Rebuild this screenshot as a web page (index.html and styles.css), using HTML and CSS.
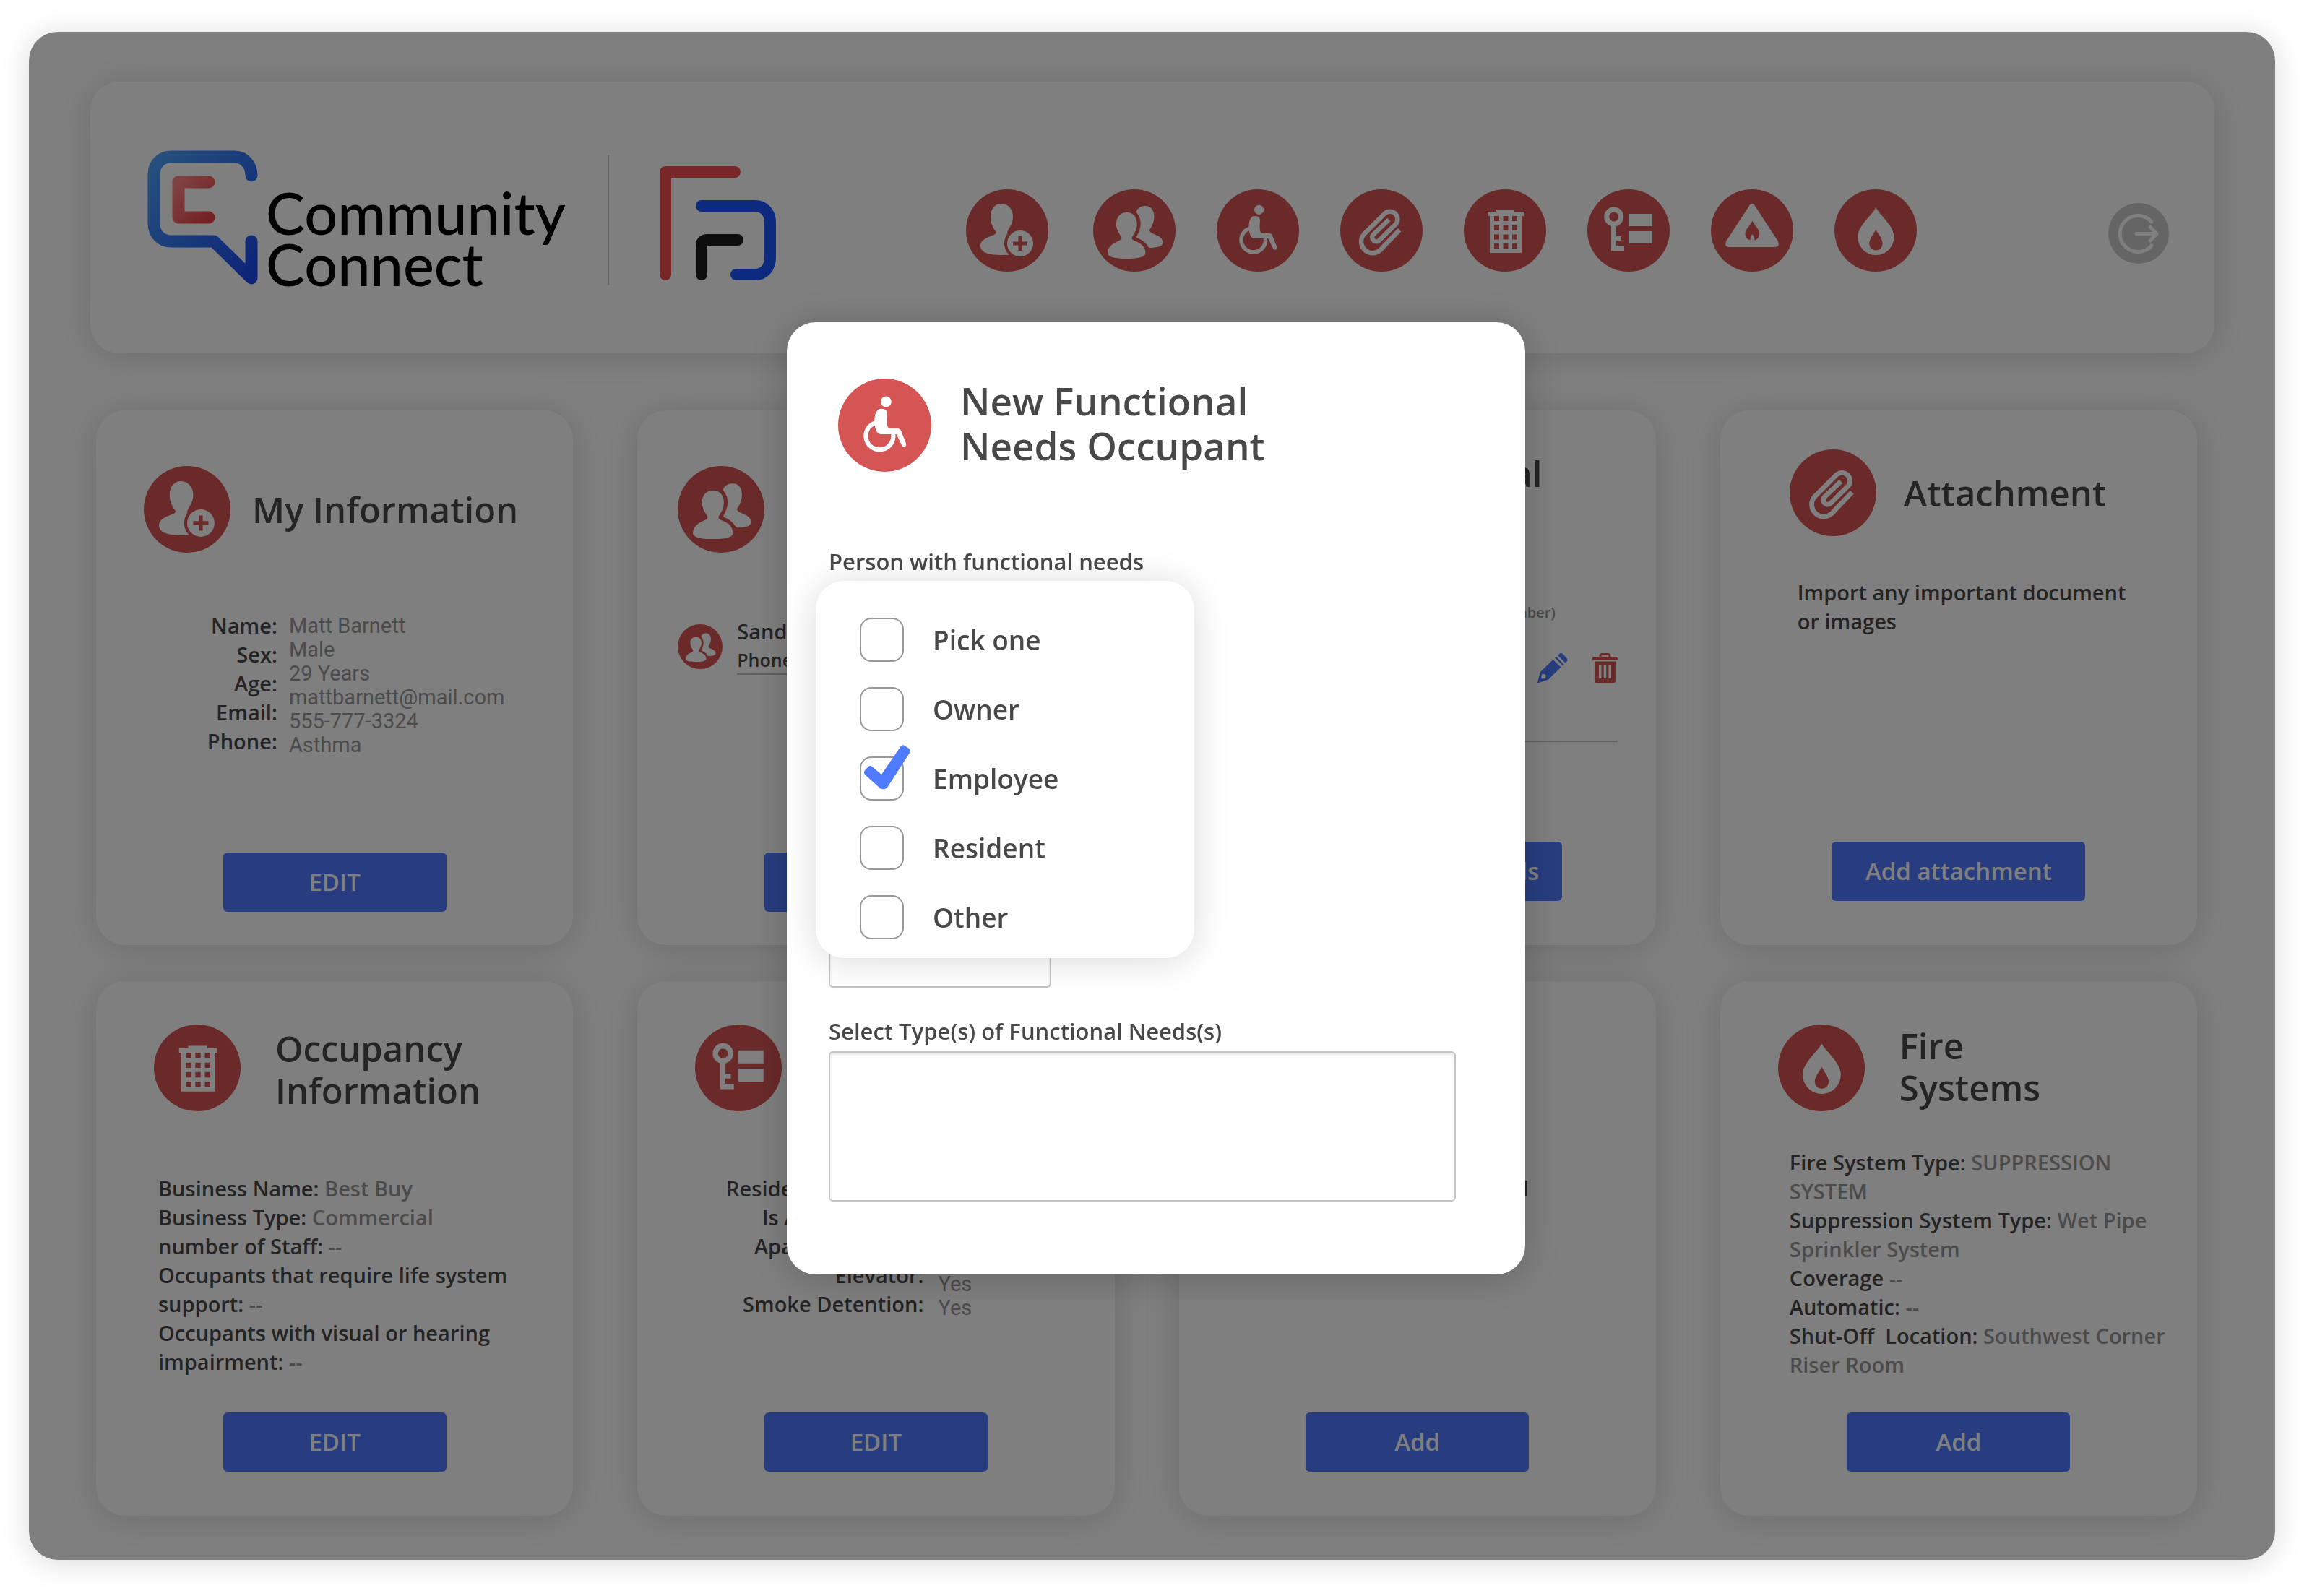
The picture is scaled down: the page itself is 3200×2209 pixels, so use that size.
FILE: index.html
```
<!DOCTYPE html>
<html lang="en">
<head>
  <meta charset="UTF-8">
  <meta name="viewport" content="width=device-width, initial-scale=1.0">
  <title>Community Connect</title>
  <link rel="stylesheet" href="styles.css">
</head>
<body>
  <!-- shared icons -->
  <svg class="sprite" width="0" height="0" aria-hidden="true">
    <symbol id="user-plus" viewBox="0 0 114 114">
      <circle cx="57" cy="57" r="57" fill="#d55454"/>
      <path fill="#fff" d="M49 20C58 20 65 27 65 38C65 47 60 53 57.500 58C56.500 62 58 63 62 65C71 68 78 71 78 80C78 88 66 91 49 91C32 91 20 88 20 78C20 70 29 67 36 64C42 62 42.500 60 41 58C37 53 34 46 34 38C34 27 40 20 49 20Z"/>
      <circle cx="75" cy="75" r="22" fill="#d55454"/>
      <circle cx="75" cy="75" r="18" fill="#fff"/>
      <path d="M75 65V85M65 75H85" stroke="#d55454" stroke-width="5"/>
    </symbol>
    <symbol id="users" viewBox="0 0 114 114">
      <circle cx="57" cy="57" r="57" fill="#d55454"/>
      <path fill="#fff" d="M72 23C80 23 84.400 29 84.400 38C84.400 46 81 52 78 56C78 59 80 60 84 62C92 65 96.500 68 96.500 74C96.500 79 88 81 78 81L60 68V30C62 26 66 23 72 23Z"/>
      <path fill="#fff" stroke="#d55454" stroke-width="10" paint-order="stroke" d="M46.500 32C55 32 60.700 38 60.700 48C60.700 56 57 61 54 66C53 69 54.500 70 59 72C67 75 72.500 80 72.500 88C72.500 94 62 96 46.500 96C31 96 20 94 20 88C20 80 27 75 34 72C38.500 70 40 69 39 66C36 61 32 56 32 48C32 38 38 32 46.500 32Z"/>
    </symbol>
    <symbol id="wheelchair" viewBox="0 0 114 114">
      <circle cx="57" cy="57" r="57" fill="#d55454"/>
      <circle cx="58.600" cy="28.300" r="6.600" fill="#fff"/>
      <path fill="#fff" d="M53 37C58 37 60.500 40 60 44.500C59 52 59.500 60.700 63 60.700H72Q75.500 60.700 77 64L83 79Q84 83 81 83.700Q79 84 78 82L71.300 68H52C47 68 44 60 44.500 50C45 43 47 37 53 37Z"/>
      <path fill="none" stroke="#fff" stroke-width="5.400" d="M46 54A16.800 16.800 0 1 0 67.400 68"/>
    </symbol>
    <symbol id="clip" viewBox="0 0 114 114">
      <circle cx="57" cy="57" r="57" fill="#d55454"/>
      <path fill="none" stroke="#fff" stroke-width="6.400" d="M82 56.300L55.300 84.300A15.800 15.800 0 0 1 33 62L61.400 33.700A10.600 10.600 0 0 1 77 48L53.400 71.300A5.800 5.800 0 0 1 45.500 63L67.400 42"/>
    </symbol>
    <symbol id="building" viewBox="0 0 114 114">
      <circle cx="57" cy="57" r="57" fill="#d55454"/>
      <path fill="#fff" d="M45 28H70V31H83V37H80V88H36V37H33V31H45Z"/>
      <path fill="none" stroke="#d55454" stroke-width="7" stroke-dasharray="7 5.500" d="M42 40.500H74M42 53.500H74M42 66H74M42 78.500H74"/>
    </symbol>
    <symbol id="key" viewBox="0 0 114 114">
      <circle cx="57" cy="57" r="57" fill="#d55454"/>
      <circle cx="36.700" cy="38" r="10" fill="none" stroke="#fff" stroke-width="7"/>
      <path fill="#fff" d="M33 50H40V65H47V71H40V78H51V85H33ZM57 34H90V51H57ZM57 58H90V75H57Z"/>
    </symbol>
    <symbol id="hazard" viewBox="0 0 114 114">
      <circle cx="57" cy="57" r="57" fill="#d55454"/>
      <path fill="#fff" d="M57 20Q59.500 20 61 23L93 72Q96 80 88 80H26Q18 80 21 72L53 23Q54.500 20 57 20Z"/>
      <path fill="#d55454" d="M57.400 43.700C60 50 67.400 55 67.400 61.500C67.400 66 64.500 69 60.500 70.600C60.800 67 59 64.500 57.400 62C56 64.500 54.300 67 54.600 70.600C50 69 47.500 66 47.500 61.500C47.500 55 55 50 57.400 43.700Z"/>
    </symbol>
    <symbol id="flame" viewBox="0 0 114 114">
      <circle cx="57" cy="57" r="57" fill="#d55454"/>
      <path fill="#fff" d="M57.400 25C62 35 82.500 50 82.500 66A25 25 0 0 1 32.300 66C32.300 50 53 35 57.400 25Z"/>
      <path fill="#d55454" d="M57.400 56C60 61 66.600 68 66.600 75.400A9.200 9.200 0 0 1 48.200 75.400C48.200 68 55 61 57.400 56Z"/>
    </symbol>
  </svg>

  <div class="stage">
    <header class="topbar">
      <a class="brand" href="#">
        <svg class="brand-mark" viewBox="0 0 153 186" aria-hidden="true">
          <defs>
            <linearGradient id="bubble" x1="0" y1="0" x2="1" y2="1">
              <stop offset="0" stop-color="#4ca0f8"/>
              <stop offset="1" stop-color="#1a48f0"/>
            </linearGradient>
            <linearGradient id="letter" x1="0" y1="0" x2="1" y2="1">
              <stop offset="0" stop-color="#ff8484"/>
              <stop offset="1" stop-color="#e8444a"/>
            </linearGradient>
          </defs>
          <path fill="none" stroke="url(#bubble)" stroke-width="17" stroke-linecap="round" stroke-linejoin="round" d="M144 35C144 20 134 9 121 9H33C18 9 9 20 9 33V101C9 115 18 126 33 126H92L144 177V126"/>
          <path fill="none" stroke="url(#letter)" stroke-width="17" stroke-linecap="round" stroke-linejoin="round" d="M85 44H43V93H85"/>
        </svg>
        <span class="brand-name">Community<br>Connect</span>
      </a>
      <span class="divider"></span>
      <svg class="fp-mark" viewBox="0 0 162 158" aria-hidden="true">
        <g fill="none" stroke-width="16" stroke-linecap="round" stroke-linejoin="round">
          <path stroke="#f24d53" d="M104 8H8V150"/>
          <path stroke="#1a54ff" d="M58 55H132C145 55 153 65 153 78V126C153 140 145 150 132 150H106"/>
          <path stroke="#1c1c1c" d="M108 102H66Q58 102 58 110V150"/>
        </g>
      </svg>
      <nav class="sections">
        <a href="#me" aria-label="My information"><svg class="nav-icon"><use href="#user-plus"/></svg></a>
        <a href="#contacts" aria-label="Contacts"><svg class="nav-icon"><use href="#users"/></svg></a>
        <a href="#needs" aria-label="Functional needs"><svg class="nav-icon"><use href="#wheelchair"/></svg></a>
        <a href="#attachment" aria-label="Attachment"><svg class="nav-icon"><use href="#clip"/></svg></a>
        <a href="#occupancy" aria-label="Occupancy information"><svg class="nav-icon"><use href="#building"/></svg></a>
        <a href="#property" aria-label="Property details"><svg class="nav-icon"><use href="#key"/></svg></a>
        <a href="#hazards" aria-label="Hazards"><svg class="nav-icon"><use href="#hazard"/></svg></a>
        <a href="#fire" aria-label="Fire systems"><svg class="nav-icon"><use href="#flame"/></svg></a>
      </nav>
      <button class="logout" type="button" aria-label="Log out">
        <svg viewBox="0 0 84 84" aria-hidden="true">
          <circle cx="42" cy="42" r="42" fill="#cacaca"/>
          <path fill="none" stroke="#fff" stroke-width="5" stroke-linecap="round" stroke-linejoin="round" d="M60 26A25 25 0 1 0 60 59M39 42.500H67M58 33L67 42.500L58 52"/>
        </svg>
      </button>
    </header>

    <main class="cards">
      <section class="card card-person" id="me">
        <div class="card-head">
          <svg class="card-icon"><use href="#user-plus"/></svg>
          <h2>My Information</h2>
        </div>
        <div class="pairs">
          <div class="pair-labels">Name:<br>Sex:<br>Age:<br>Email:<br>Phone:</div>
          <div class="pair-values">Matt Barnett<br>Male<br>29 Years<br>mattbarnett@mail.com<br>555-777-3324<br>Asthma</div>
        </div>
        <button class="btn" type="button">EDIT</button>
      </section>

      <section class="card card-person card-contacts" id="contacts">
        <div class="card-head">
          <svg class="card-icon"><use href="#users"/></svg>
          <h2>Contacts</h2>
        </div>
        <div class="contact">
          <svg class="contact-icon"><use href="#users"/></svg>
          <div class="contact-text">
            <div>Sandra Barnett</div>
            <div class="contact-phone">Phone: 555-777-3325</div>
          </div>
        </div>
        <button class="btn" type="button">EDIT</button>
      </section>

      <section class="card card-top card-needs" id="needs">
        <div class="card-head">
          <svg class="card-icon"><use href="#wheelchair"/></svg>
          <h2>Functional<br>Needs</h2>
        </div>
        <div class="occupant">
          <div class="occupant-note">(Family member)</div>
          <div class="occupant-actions">
            <button class="icon-btn" type="button" aria-label="Edit occupant">
              <svg width="42" height="42" viewBox="0 0 42 42" fill="#4e7bff" aria-hidden="true">
                <path fill-rule="evenodd" d="M21.500 9L32.500 19.500L15 36.500L1 41.500Q0 41.500 0 40.500L3.700 26.500ZM6 29L5 35.500L11 35L12 31L10 29Z"/>
                <path d="M24 6.500L26 5L37 16L35 17.500ZM28 3L31 0.500Q33 -0.500 35 1L40.500 7Q42 9 41 11L38.500 13.500Z"/>
              </svg>
            </button>
            <button class="icon-btn" type="button" aria-label="Delete occupant">
              <svg width="35" height="42" viewBox="0 0 35 42" fill="#d55454" aria-hidden="true">
                <path fill="none" stroke="#d55454" stroke-width="3" d="M11 6V4Q11 1.500 13.500 1.500H21.500Q24 1.500 24 4V6"/>
                <path d="M0 9.600V7Q0 5 3 5H32Q35 5 35 7V9.600Z"/>
                <path fill-rule="evenodd" d="M3 11.600H32V38Q32 41.500 28.500 41.500H6.500Q3 41.500 3 38ZM9 16V35H12.500V16ZM15.700 16V35H19.200V16ZM22.500 16V35H26V16Z"/>
              </svg>
            </button>
          </div>
        </div>
        <button class="btn btn-wide" type="button">Add functional needs</button>
      </section>

      <section class="card card-top card-attachment" id="attachment">
        <div class="card-head">
          <svg class="card-icon"><use href="#clip"/></svg>
          <h2>Attachment</h2>
        </div>
        <p class="card-text">Import any important document or images</p>
        <button class="btn btn-wide" type="button">Add attachment</button>
      </section>

      <section class="card card-details" id="occupancy">
        <div class="card-head">
          <svg class="card-icon"><use href="#building"/></svg>
          <h2>Occupancy<br>Information</h2>
        </div>
        <ul class="facts">
          <li>Business Name: <span>Best Buy</span></li>
          <li>Business Type: <span>Commercial</span></li>
          <li>number of Staff: <span>--</span></li>
          <li>Occupants that require life system support: <span>--</span></li>
          <li>Occupants with visual or hearing impairment: <span>--</span></li>
        </ul>
        <button class="btn" type="button">EDIT</button>
      </section>

      <section class="card card-details card-property" id="property">
        <div class="card-head">
          <svg class="card-icon"><use href="#key"/></svg>
          <h2>Property<br>Details</h2>
        </div>
        <div class="pairs">
          <div class="pair-labels">Residence Number:<br>Is Alarm Tested:<br>Apartment Type:<br>Elevator:<br>Smoke Detention:</div>
          <div class="pair-values">Two<br>Yes<br>12<br>Yes<br>Yes<br>Yes</div>
        </div>
        <button class="btn" type="button">EDIT</button>
      </section>

      <section class="card card-details card-hazards" id="hazards">
        <div class="card-head">
          <svg class="card-icon"><use href="#hazard"/></svg>
          <h2>Hazards</h2>
        </div>
        <p class="card-text">Add hazardous material</p>
        <button class="btn" type="button">Add</button>
      </section>

      <section class="card card-details card-fire" id="fire">
        <div class="card-head">
          <svg class="card-icon"><use href="#flame"/></svg>
          <h2>Fire<br>Systems</h2>
        </div>
        <ul class="facts">
          <li>Fire System Type: <span>SUPPRESSION SYSTEM</span></li>
          <li>Suppression System Type: <span>Wet Pipe Sprinkler System</span></li>
          <li>Coverage <span>--</span></li>
          <li>Automatic: <span>--</span></li>
          <li>Shut-Off&nbsp; Location: <span>Southwest Corner Riser Room</span></li>
        </ul>
        <button class="btn" type="button">Add</button>
      </section>
    </main>
    <div class="shade"></div>
  </div>

  <div class="modal-wrap">
    <form class="modal" role="dialog" aria-labelledby="modalTitle">
      <div class="modal-head">
        <svg class="modal-icon"><use href="#wheelchair"/></svg>
        <h1 id="modalTitle">New Functional<br>Needs Occupant</h1>
      </div>

      <div class="field field-person">
        <label for="person">Person with functional needs</label>
        <input class="control" type="text" id="person" readonly>
        <fieldset class="menu" aria-label="Person with functional needs">
          <label class="option"><input type="checkbox" name="role" value="any">Pick one</label>
          <label class="option"><input type="checkbox" name="role" value="owner">Owner</label>
          <label class="option">
            <input type="checkbox" name="role" value="employee" checked>
            <svg class="tick" viewBox="0 0 66 62" aria-hidden="true">
              <path fill="#4e7bff" d="M2 35L7 30Q9 28 12 30L25 41L51 3Q53 -1 57 1L63 5Q66 7 64 11L33 59Q30 62 26 61Q24 61 22 59L2 41Q0 38 2 35Z"/>
            </svg>
            Employee
          </label>
          <label class="option"><input type="checkbox" name="role" value="resident">Resident</label>
          <label class="option"><input type="checkbox" name="role" value="other">Other</label>
        </fieldset>
      </div>

      <div class="field field-age">
        <input class="control" type="text" id="age" aria-label="Age">
      </div>

      <div class="field">
        <label for="types">Select Type(s) of Functional Needs(s)</label>
        <textarea class="control control-area" id="types"></textarea>
      </div>
    </form>
  </div>
</body>
</html>
```
FILE: styles.css
```
* {
  box-sizing: border-box;
}

body {
  margin: 0;
  padding: 44px 51px 49px 40px;
  font-family: 'Open Sans', sans-serif;
  font-weight: 600;
  font-size: 29px;
  line-height: 40px;
  color: #484848;
  background: #fff;
}

h1, h2, p, ul {
  margin: 0;
  padding: 0;
}

button {
  font: inherit;
  border: none;
  padding: 0;
  cursor: pointer;
}

svg {
  display: block;
}

.sprite {
  position: absolute;
}

.stage {
  position: relative;
  padding: 69px 84px 61px 85px;
  border-radius: 40px;
  background: #fff;
  box-shadow: 0 4px 40px rgba(0, 0, 0, 0.15);
}

.shade {
  position: absolute;
  inset: 0;
  border-radius: 40px;
  background: rgba(0, 0, 0, 0.5);
}

/* header */
.topbar {
  display: flex;
  align-items: center;
  min-height: 376px;
  padding: 0 63px 0 79px;
  border-radius: 40px;
  background: #fff;
  box-shadow: 0 4px 50px rgba(0, 0, 0, 0.15);
}

.brand {
  display: flex;
  align-items: center;
  gap: 11px;
  color: #000;
  text-decoration: none;
}

.brand-mark {
  width: 153px;
  height: 186px;
}

.brand-name {
  margin-top: 56px;
  font-family: Lato, sans-serif;
  font-weight: 500;
  font-size: 81px;
  line-height: 71px;
}

.divider {
  width: 2px;
  height: 180px;
  margin: 8px 70px 0 58px;
  background: #cacaca;
}

.fp-mark {
  width: 162px;
  height: 158px;
  margin-top: 16px;
}

.sections {
  display: flex;
  gap: 57px;
  margin: 36px 0 0 262px;
}

.sections a:first-child {
  margin-right: 5px;
}

.nav-icon {
  width: 114px;
  height: 114px;
}

.logout {
  width: 84px;
  height: 84px;
  margin: 44px 0 0 auto;
  border-radius: 50%;
  background: none;
}

/* cards */
.cards {
  display: grid;
  grid-template-columns: repeat(4, 1fr);
  gap: 50px 89px;
  margin: 79px 24px 0 8px;
}

.card {
  display: flex;
  flex-direction: column;
  min-height: 740px;
  padding-bottom: 61px;
  border-radius: 40px;
  background: #fff;
  box-shadow: 0 4px 50px rgba(0, 0, 0, 0.15);
}

.card-head {
  display: flex;
  align-items: center;
  gap: 48px;
}

.card-head h2 {
  font-weight: 600;
  font-size: 49px;
  line-height: 58px;
}

.card-icon {
  flex: none;
  width: 120px;
  height: 120px;
}

.card-person {
  padding-bottom: 46px;
}

.card-person .card-head {
  gap: 30px;
  padding: 77px 0 81px 66px;
}

.card-contacts .card-head {
  padding-left: 56px;
}

.card-top .card-head {
  gap: 38px;
  padding: 54px 0 58px 96px;
}

.card-needs .card-head {
  align-items: flex-end;
}

.card-details .card-head {
  align-items: flex-end;
  padding: 60px 0 87px 80px;
}

.card-fire .card-head {
  align-items: flex-start;
  padding-bottom: 51px;
}

.card-text {
  padding: 0 80px 0 78px;
}

.card-attachment .card-text {
  padding-left: 107px;
}

.card-hazards .card-text {
  padding-right: 176px;
  text-align: right;
}

.pairs {
  display: grid;
  grid-template-columns: 38% 1fr;
  column-gap: 16px;
}

.card-property .pairs {
  grid-template-columns: 60% 1fr;
  column-gap: 20px;
}

.pair-labels {
  text-align: right;
}

.pair-values {
  padding-top: 4px;
  font-family: Roboto, sans-serif;
  font-weight: 400;
  line-height: 33px;
  color: #979797;
}

.facts {
  padding: 0 60px 0 86px;
  list-style: none;
}

.facts span {
  color: #979797;
}

.card-fire .facts {
  padding: 0 30px 0 96px;
}

.contact {
  display: flex;
  align-items: flex-start;
  gap: 20px;
  padding: 8px 60px 0 56px;
}

.contact-icon {
  width: 62px;
  height: 62px;
  margin-top: 10px;
}

.contact-text {
  flex: 1;
  border-bottom: 2px solid #c4c4c4;
}

.contact-phone {
  font-size: 25px;
  line-height: 38px;
}

.occupant {
  margin: 28px 53px 0 78px;
  padding-bottom: 79px;
  border-bottom: 2px solid #c4c4c4;
}

.occupant-note {
  padding-right: 86px;
  font-size: 20px;
  text-align: right;
  color: #979797;
}

.occupant-actions {
  display: flex;
  justify-content: flex-end;
  gap: 34px;
  margin-top: 36px;
}

.icon-btn {
  background: none;
}

.btn {
  align-self: center;
  min-width: 309px;
  height: 82px;
  margin-top: auto;
  padding: 0 32px;
  border-radius: 6px;
  font-size: 33px;
  color: #fff;
  background: #4e7bff;
}

.btn-wide {
  min-width: 351px;
}

/* dialog */
.modal-wrap {
  position: fixed;
  inset: 0;
  display: flex;
  align-items: center;
  justify-content: center;
}

.modal {
  width: 1022px;
  padding: 78px 96px 101px 58px;
  border-radius: 40px;
  background: #fff;
  box-shadow: 0 4px 50px rgba(0, 0, 0, 0.2);
}

.modal-head {
  display: flex;
  align-items: flex-start;
  gap: 40px;
  padding-left: 13px;
  margin-bottom: 104px;
}

.modal-head h1 {
  font-weight: 600;
  font-size: 53px;
  line-height: 62px;
}

.modal-icon {
  width: 129px;
  height: 129px;
}

.field {
  position: relative;
  display: flex;
  flex-direction: column;
  align-items: flex-start;
  gap: 8px;
  font-size: 31px;
}

.field-person {
  gap: 28px;
}

.field-age {
  margin: 378px 0 40px;
}

.control {
  width: 308px;
  height: 82px;
  padding: 0 20px;
  border: 2px solid #c4c4c4;
  border-radius: 6px;
  font: inherit;
  background: #fff;
  box-shadow: inset 0 3px 4px rgba(0, 0, 0, 0.1);
}

.control-area {
  width: 100%;
  height: 208px;
  padding: 20px;
  resize: none;
}

.menu {
  position: absolute;
  top: 47px;
  left: -18px;
  z-index: 1;
  width: 524px;
  margin: 0;
  padding: 34px 61px 8px;
  border: none;
  border-radius: 40px;
  background: #fff;
  box-shadow: 0 4px 50px rgba(0, 0, 0, 0.15);
}

.option {
  position: relative;
  display: flex;
  align-items: center;
  gap: 40px;
  height: 96px;
  font-size: 37px;
}

.option input {
  appearance: none;
  width: 61px;
  height: 61px;
  margin: 0;
  border: 2px solid #979797;
  border-radius: 16px;
  background: #fff;
}

.tick {
  position: absolute;
  top: 1px;
  left: 5px;
  width: 66px;
  height: 62px;
}
```
